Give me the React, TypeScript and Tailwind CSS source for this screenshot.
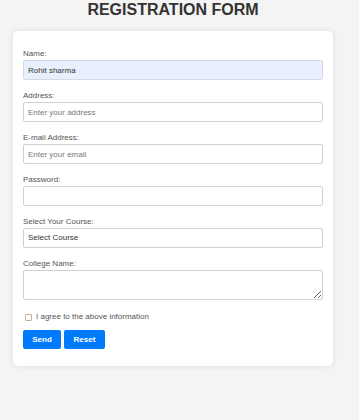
export default function App() {
  const inputCls =
    "block w-full h-[20px] px-[4px] border rounded-[2px] text-[8px] text-[#333] outline-none placeholder:text-[#777]";

  return (
    <div className="min-h-[420px] w-[359px] bg-[#f4f4f4] font-['Liberation_Sans',Arial,sans-serif]">
      <div className="w-[346px] pt-[1px]">
        <h1 className="text-center text-[16px] leading-[18px] font-bold text-[#333]">REGISTRATION FORM</h1>
        <form className="mx-auto mt-[12px] w-[320px] rounded-[5px] bg-white px-[10px] pt-[18px] pb-[17px] shadow-[0_0_6px_rgba(0,0,0,0.09)]">
          <div className="mb-[11px]">
            <label className="block mb-[1px] text-[8px] leading-[10px] text-[#555]">Name:</label>
            <input className={inputCls + " bg-[#e8f0fe] border-[#d3dae6]"} defaultValue="Rohit sharma" />
          </div>
          <div className="mb-[11px]">
            <label className="block mb-[1px] text-[8px] leading-[10px] text-[#555]">Address:</label>
            <input className={inputCls + " bg-white border-[#d0d0d0]"} placeholder="Enter your address" />
          </div>
          <div className="mb-[11px]">
            <label className="block mb-[1px] text-[8px] leading-[10px] text-[#555]">E-mail Address:</label>
            <input className={inputCls + " bg-white border-[#d0d0d0]"} placeholder="Enter your email" />
          </div>
          <div className="mb-[11px]">
            <label className="block mb-[1px] text-[8px] leading-[10px] text-[#555]">Password:</label>
            <input type="password" className={inputCls + " bg-white border-[#d0d0d0]"} />
          </div>
          <div className="mb-[11px]">
            <label className="block mb-[1px] text-[8px] leading-[10px] text-[#555]">Select Your Course:</label>
            <div className="flex h-[20px] items-center px-[4px] border border-[#d0d0d0] rounded-[2px] text-[8px] text-[#333]">
              Select Course
            </div>
          </div>
          <div>
            <label className="block mb-[1px] text-[8px] leading-[10px] text-[#555]">College Name:</label>
            <textarea className="block w-full h-[30px] px-[4px] border border-[#d0d0d0] rounded-[2px] text-[8px] outline-none" />
          </div>
          <div className="mt-[12px] flex items-center pl-[2px]">
            <span className="inline-block h-[7px] w-[7px] rounded-[1px] border border-[#c9ad90]" />
            <span className="ml-[4px] text-[8px] leading-[10px] text-[#555]">I agree to the above information</span>
          </div>
          <div className="mt-[8px] flex gap-[3px]">
            <button type="button" className="h-[19px] w-[38px] rounded-[2px] bg-[#007bff] text-[8px] font-bold text-white">
              Send
            </button>
            <button type="button" className="h-[19px] w-[41px] rounded-[2px] bg-[#007bff] text-[8px] font-bold text-white">
              Reset
            </button>
          </div>
        </form>
      </div>
    </div>
  );
}
